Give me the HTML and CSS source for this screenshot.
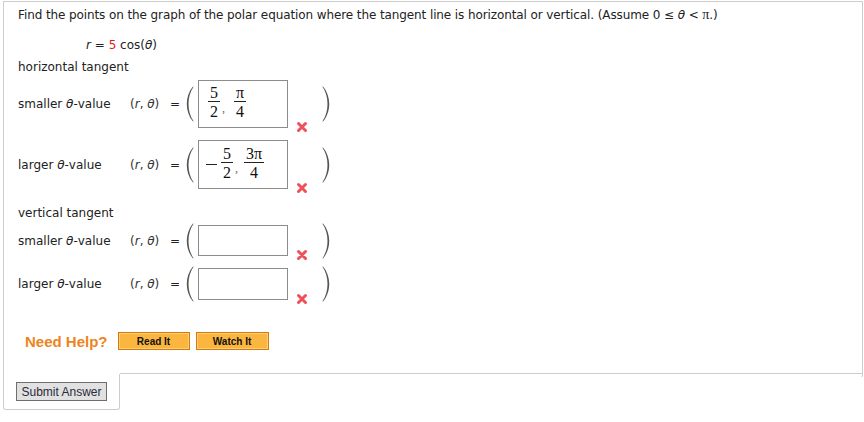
FILE: index.html
```html
<!DOCTYPE html>
<html>
<head>
<meta charset="utf-8">
<link rel="stylesheet" href="styles.css">
</head>
<body>
<div class="panel">
  <div class="content">
    <p class="q">Find the points on the graph of the polar equation where the tangent line is horizontal or vertical. (Assume 0 ≤ <i>θ</i> &lt; <span class="pi">π</span>.)</p>
    <p class="eqn"><i>r</i> = <span class="red">5</span> cos(<i>θ</i>)</p>
    <p class="sec">horizontal tangent</p>

    <div class="row first">
      <span class="lbl">smaller <i>θ</i>-value</span>
      <span class="rt">(<i>r</i>, <i>θ</i>)</span>
      <span class="eq">=</span>
      <svg class="par lpar" viewBox="0 0 8 36"><path d="M7 0.5 C-1.3 10 -1.3 26 7 35.5 L7.6 35.2 C0.8 26 0.8 10 7.6 0.8 Z"/></svg>
      <div class="box">
        <span class="frac"><span class="num">5</span><span class="den">2</span></span>
        <span class="comma">,</span>
        <span class="frac"><span class="num">π</span><span class="den">4</span></span>
      </div>
      <svg class="x" viewBox="0 0 12 12"><path d="M2.5 2.5 L9.5 9.5 M9.5 2.5 L2.5 9.5"/></svg>
      <svg class="par rpar" viewBox="0 0 8 36"><path d="M7 0.5 C-1.3 10 -1.3 26 7 35.5 L7.6 35.2 C0.8 26 0.8 10 7.6 0.8 Z"/></svg>
    </div>

    <div class="row second">
      <span class="lbl">larger <i>θ</i>-value</span>
      <span class="rt">(<i>r</i>, <i>θ</i>)</span>
      <span class="eq">=</span>
      <svg class="par lpar" viewBox="0 0 8 36"><path d="M7 0.5 C-1.3 10 -1.3 26 7 35.5 L7.6 35.2 C0.8 26 0.8 10 7.6 0.8 Z"/></svg>
      <div class="box">
        <span class="minus"></span>
        <span class="frac"><span class="num">5</span><span class="den">2</span></span>
        <span class="comma c2">,</span>
        <span class="frac"><span class="num">3π</span><span class="den">4</span></span>
      </div>
      <svg class="x" viewBox="0 0 12 12"><path d="M2.5 2.5 L9.5 9.5 M9.5 2.5 L2.5 9.5"/></svg>
      <svg class="par rpar" viewBox="0 0 8 36"><path d="M7 0.5 C-1.3 10 -1.3 26 7 35.5 L7.6 35.2 C0.8 26 0.8 10 7.6 0.8 Z"/></svg>
    </div>

    <p class="sec sec2">vertical tangent</p>

    <div class="row third">
      <span class="lbl">smaller <i>θ</i>-value</span>
      <span class="rt">(<i>r</i>, <i>θ</i>)</span>
      <span class="eq">=</span>
      <svg class="par lpar" viewBox="0 0 8 36"><path d="M7 0.5 C-1.3 10 -1.3 26 7 35.5 L7.6 35.2 C0.8 26 0.8 10 7.6 0.8 Z"/></svg>
      <div class="box"></div>
      <svg class="x" viewBox="0 0 12 12"><path d="M2.5 2.5 L9.5 9.5 M9.5 2.5 L2.5 9.5"/></svg>
      <svg class="par rpar" viewBox="0 0 8 36"><path d="M7 0.5 C-1.3 10 -1.3 26 7 35.5 L7.6 35.2 C0.8 26 0.8 10 7.6 0.8 Z"/></svg>
    </div>

    <div class="row fourth">
      <span class="lbl">larger <i>θ</i>-value</span>
      <span class="rt">(<i>r</i>, <i>θ</i>)</span>
      <span class="eq">=</span>
      <svg class="par lpar" viewBox="0 0 8 36"><path d="M7 0.5 C-1.3 10 -1.3 26 7 35.5 L7.6 35.2 C0.8 26 0.8 10 7.6 0.8 Z"/></svg>
      <div class="box"></div>
      <svg class="x" viewBox="0 0 12 12"><path d="M2.5 2.5 L9.5 9.5 M9.5 2.5 L2.5 9.5"/></svg>
      <svg class="par rpar" viewBox="0 0 8 36"><path d="M7 0.5 C-1.3 10 -1.3 26 7 35.5 L7.6 35.2 C0.8 26 0.8 10 7.6 0.8 Z"/></svg>
    </div>

    <div class="help">
      <span class="need">Need Help?</span>
      <span class="obtn">Read It</span>
      <span class="obtn watch">Watch It</span>
    </div>
  </div>
  <div class="footer">
    <div class="tab"><button class="submit">Submit Answer</button></div>
    <div class="rest"></div>
  </div>
</div>
</body>
</html>
```

FILE: styles.css
```css
html, body {
  margin: 0;
  padding: 0;
  background: #fff;
}
body {
  font-family: "DejaVu Sans", Verdana, sans-serif;
  font-size: 12px;
  color: #222;
}
.panel {
  margin: 1px 0 0 3px;
  width: 860px;
}
.content {
  border: 1px solid #cdcdcd;
  border-bottom: none;
  padding: 5px 14px 24px 14px;
}
p {
  margin: 0;
  line-height: 16px;
}
.q { letter-spacing: -0.1px; }
.pi { font-family: "Liberation Serif", serif; font-size: 14px; }
.eqn {
  margin-top: 14px;
  margin-left: 68px;
}
.red { color: #e41b1b; }
.sec { margin-top: 6px; }
.sec2 { margin-top: 16px; }
.row {
  display: flex;
  align-items: center;
}
.first { margin-top: 5px; height: 48px; }
.second { margin-top: 12px; height: 49px; }
.third { margin-top: 4px; height: 31px; }
.fourth { margin-top: 12px; height: 32px; }
.lbl { width: 112px; }
.rt { width: 40px; color: #333; }
.eq { width: 16px; }
.par {
  width: 8px;
  height: 36px;
  fill: #555;
  flex: none;
}
.lpar { margin-right: 4px; }
.rpar {
  transform: scaleX(-1);
  margin-left: 14px;
}
.box {
  width: 90px;
  height: 100%;
  box-sizing: border-box;
  border: 1px solid #8c8c8c;
  display: flex;
  align-items: center;
  padding-left: 9px;
  font-family: "Liberation Serif", "Times New Roman", serif;
  font-size: 16px;
  color: #111;
}
.x {
  width: 12px;
  height: 12px;
  margin-left: 8px;
  align-self: flex-end;
  margin-bottom: -5px;
  stroke: #ee5159;
  stroke-width: 3;
  stroke-linecap: round;
  flex: none;
}
.frac {
  display: inline-flex;
  flex-direction: column;
  align-items: center;
  margin-top: -3px;
}
.num {
  line-height: 14px;
  border-bottom: 1px solid #222;
  padding: 0 2px 1px;
}
.den {
  line-height: 14px;
  padding-top: 3px;
}
.comma {
  font-size: 12px;
  color: #666;
  margin: 8px 9px 0 2px;
}
.c2 { margin-right: 6px; }
.minus {
  width: 11px;
  height: 1px;
  background: #222;
  margin: 0 4px 0 -2px;
}
.help {
  display: flex;
  align-items: center;
  margin-top: 32px;
  margin-left: 7px;
  height: 18px;
}
.need {
  font-family: "Liberation Sans", Arial, sans-serif;
  font-weight: bold;
  font-size: 15px;
  color: #ee8420;
  margin-right: 10px;
}
.obtn {
  box-sizing: border-box;
  width: 72px;
  height: 18px;
  border: 1px solid #d27a18;
  box-shadow: inset 0 0 0 1px #ffcf70;
  background: #fbb640;
  font-family: "Liberation Sans", Arial, sans-serif;
  font-weight: bold;
  font-size: 10px;
  color: #111;
  display: flex;
  align-items: center;
  justify-content: center;
}
.watch {
  width: 73px;
  margin-left: 6px;
}
.footer {
  display: flex;
}
.tab {
  width: 117px;
  box-sizing: border-box;
  border: 1px solid #cdcdcd;
  border-top: none;
  border-radius: 0 0 3px 3px;
  padding: 8px 0 8px 12px;
}
.submit {
  display: block;
  box-sizing: border-box;
  width: 91px;
  height: 19px;
  margin: 0;
  padding: 0;
  background: #e1e1e1;
  border: 1px solid #6f6f6f;
  border-radius: 0;
  font-family: "Liberation Sans", Arial, sans-serif;
  font-size: 12px;
  color: #2a2a3a;
}
.rest {
  flex: 1;
  height: 3px;
  border-top: 1px solid #cdcdcd;
  border-right: 1px solid #cdcdcd;
  border-bottom: 1px solid transparent;
  border-radius: 0 0 3px 0;
  margin-top: -1px;
}
```
